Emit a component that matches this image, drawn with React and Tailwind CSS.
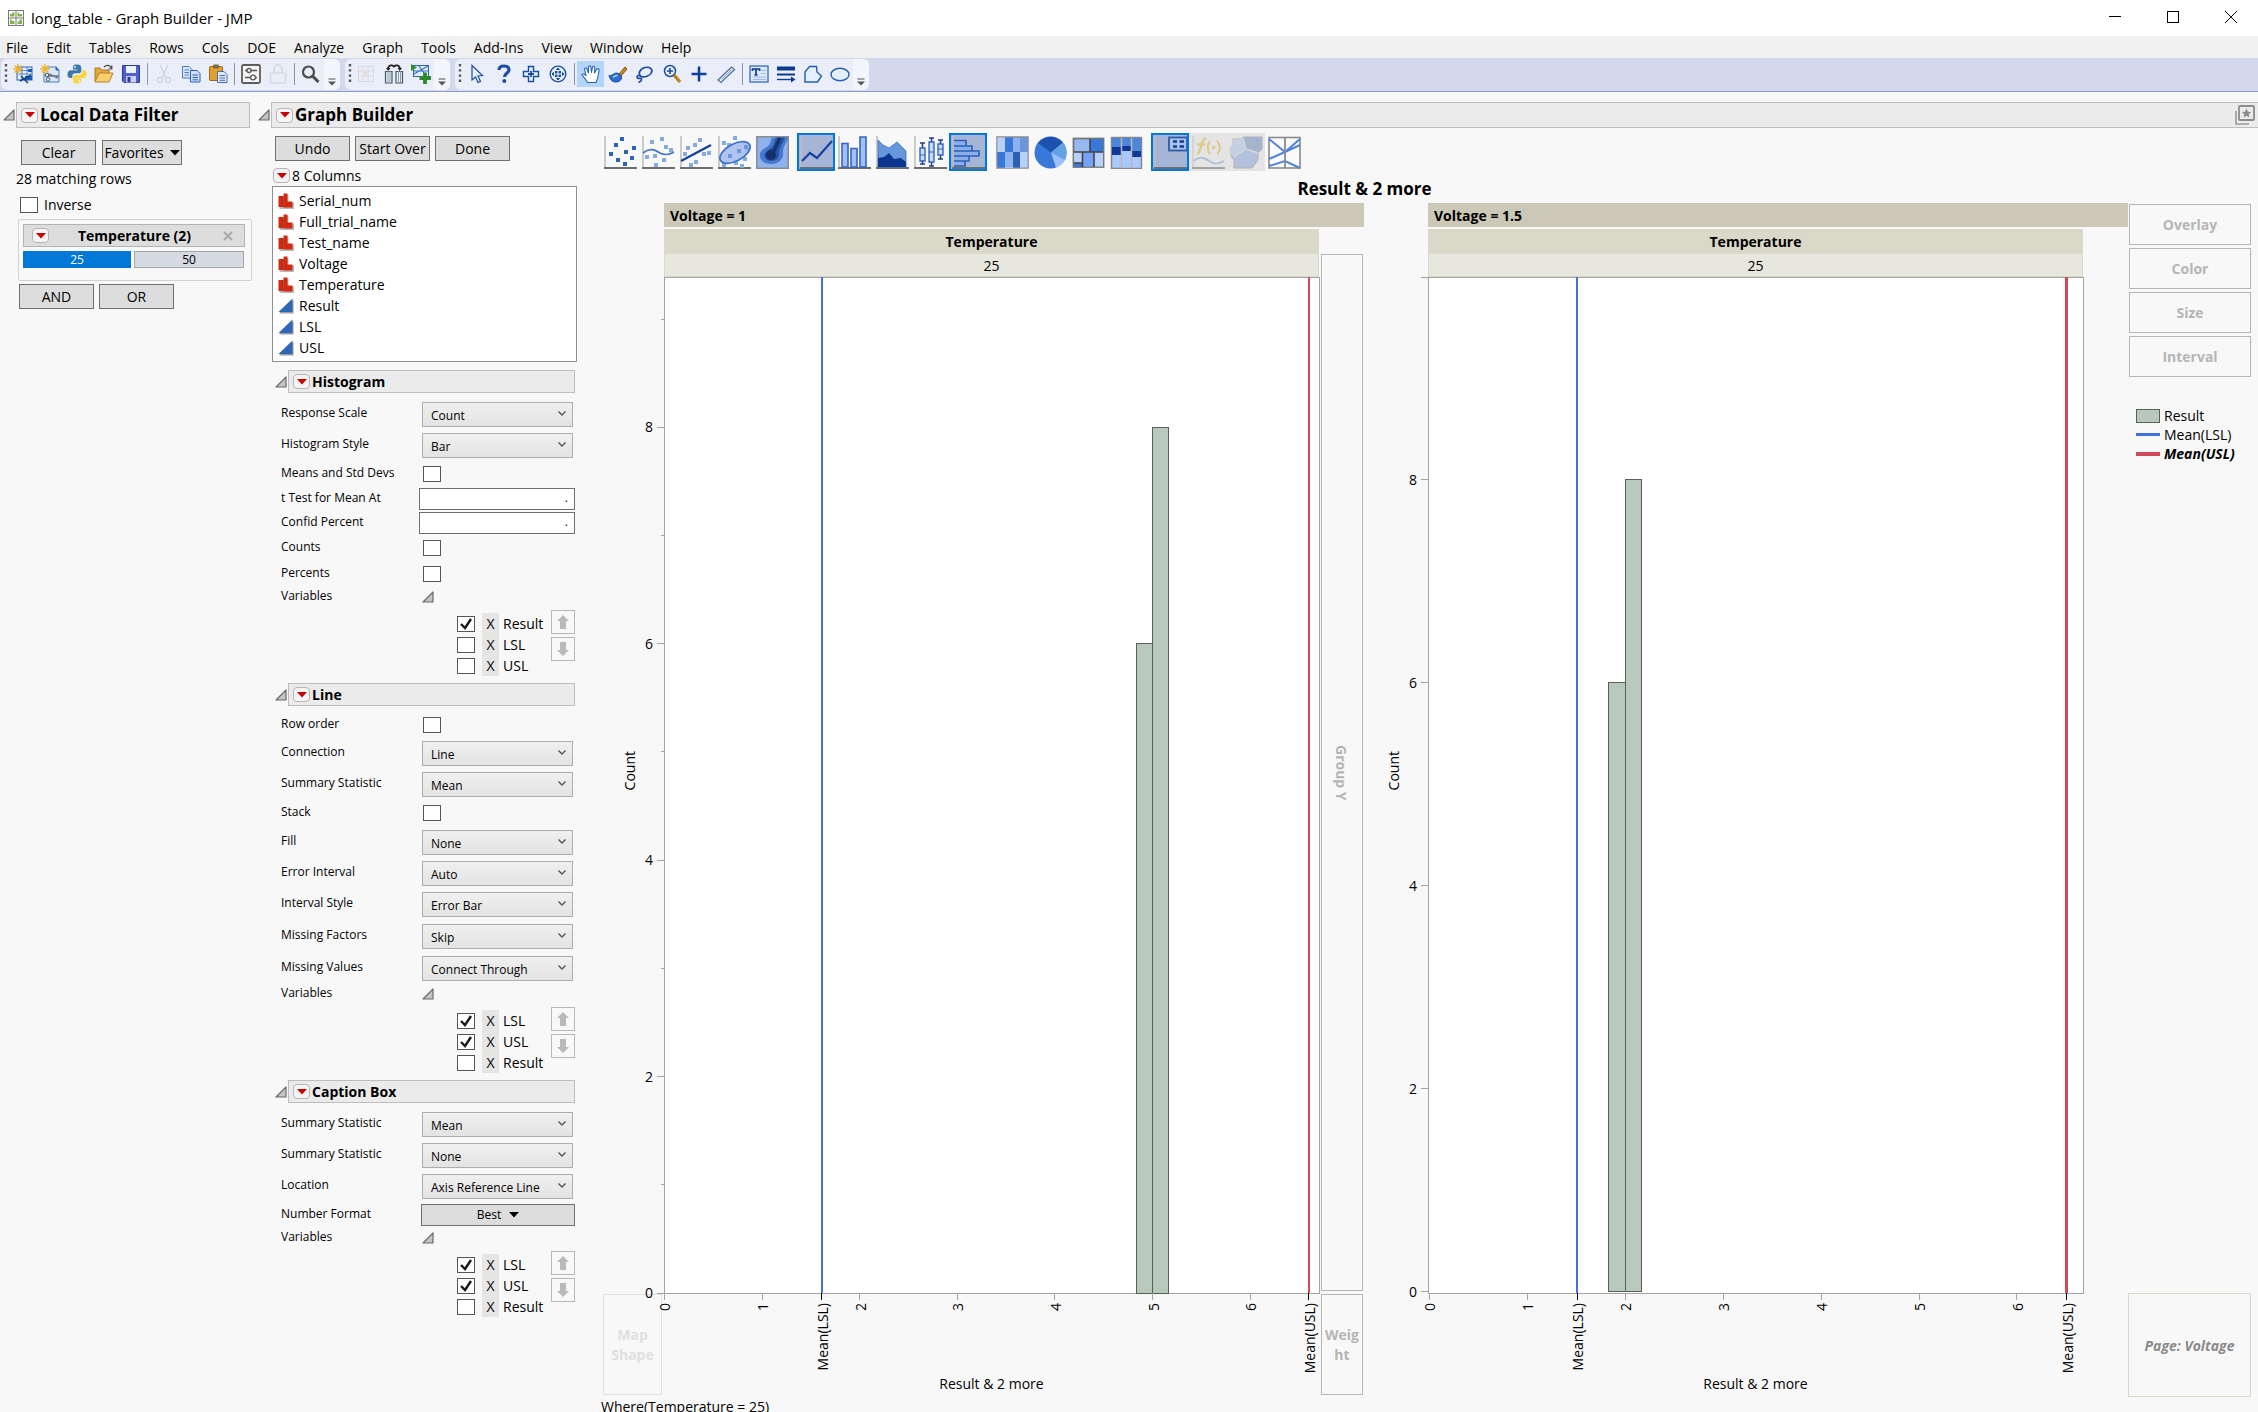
import React from "react";

/* ---------- small shared pieces ---------- */

function Ic({ children, size = "size-5", box = "0 0 20 20", dim = false }) {
  return (
    <svg viewBox={box} className={`${size} ${dim ? "opacity-25" : ""}`} fill="none" aria-hidden="true">
      {children}
    </svg>
  );
}

function Disclosure() {
  return (
    <button type="button" aria-label="Collapse" className="flex w-3 shrink-0 items-center justify-center">
      <svg viewBox="0 0 12 12" className="size-3" aria-hidden="true">
        <path d="M1 11 L11 1 V11 Z" fill="#c4c4c4" stroke="#6b6b6b" strokeWidth="1.2" strokeLinejoin="round" />
      </svg>
    </button>
  );
}

function RedMenu() {
  return (
    <button
      type="button"
      aria-label="Options"
      className="flex h-[15px] w-[17px] shrink-0 items-center justify-center rounded-sm border border-[#b5b5b5] bg-[#f4f4f4]"
    >
      <svg viewBox="0 0 10 6" className="h-1.5 w-2.5" aria-hidden="true">
        <path d="M0 0 H10 L5 5.6 Z" fill="#c80000" />
      </svg>
    </button>
  );
}

function GreyButton({ children, className = "w-[75px]" }) {
  return (
    <button type="button" className={`flex h-[25px] items-center justify-center border border-[#707070] bg-[#dddddd] text-[14px] whitespace-nowrap ${className}`}>
      {children}
    </button>
  );
}

function Check({ id, checked = false, label }) {
  return (
    <span className="relative flex h-4 w-[18px] shrink-0">
      <input
        id={id}
        type="checkbox"
        defaultChecked={checked}
        aria-label={label}
        className="peer m-0 h-4 w-[18px] appearance-none border border-[#555] bg-white"
      />
      <svg viewBox="0 0 18 16" className="pointer-events-none absolute inset-0 hidden h-4 w-[18px] peer-checked:block" aria-hidden="true">
        <path d="M4 8 L8 12 L14 3" fill="none" stroke="#1a1a1a" strokeWidth="2.4" />
      </svg>
    </span>
  );
}

/* ---------- title, menu, window toolbar ---------- */

function TitleBar() {
  return (
    <header className="flex h-9 shrink-0 items-center justify-between bg-white pl-2">
      <div className="flex items-center gap-[7px] text-[15px]">
        <svg viewBox="0 0 16 16" className="size-4" aria-hidden="true">
          <rect x="0.5" y="0.5" width="15" height="15" fill="#fff" stroke="#7a7a7a" />
          <path d="M8 0.5 V15.5 M0.5 8 H15.5" stroke="#7a7a7a" />
          <path d="M2 6.5 V4 H4 V2.5 H6.5 V6.5 Z M9.5 2.5 H11 V4 H14 V6.5 H9.5 Z M2 9.5 H4 V11 H6.5 V14 H2 Z M9.5 11.5 H11.5 V9.5 H14 V14 H9.5 Z" fill="#7db548" />
        </svg>
        <h1>long_table - Graph Builder - JMP</h1>
      </div>
      <div className="flex h-full gap-1 pb-0.5">
        <button type="button" aria-label="Minimize" className="flex w-[54px] items-center justify-center">
          <svg viewBox="0 0 12 12" className="size-3"><path d="M0 5.5 H12" stroke="#000" /></svg>
        </button>
        <button type="button" aria-label="Maximize" className="flex w-[54px] items-center justify-center">
          <svg viewBox="0 0 12 12" className="size-3"><rect x="0.5" y="0.5" width="11" height="11" fill="none" stroke="#000" /></svg>
        </button>
        <button type="button" aria-label="Close" className="flex w-[54px] items-center justify-center">
          <svg viewBox="0 0 12 12" className="size-3"><path d="M0 0 L12 12 M12 0 L0 12" stroke="#000" /></svg>
        </button>
      </div>
    </header>
  );
}

const MENUS = ["File", "Edit", "Tables", "Rows", "Cols", "DOE", "Analyze", "Graph", "Tools", "Add-Ins", "View", "Window", "Help"];

function MenuBar() {
  return (
    <nav className="flex h-[22px] shrink-0 items-center gap-[18px] bg-[#f0f0f0] pl-1.5 text-[14px]">
      {MENUS.map((m) => (
        <button type="button" key={m}>{m}</button>
      ))}
    </nav>
  );
}

function Tool({ label, active = false, children }) {
  return (
    <button type="button" aria-label={label} className={`flex h-[26px] w-[27px] items-center justify-center ${active ? "bg-[#b5d5f8]" : ""}`}>
      {children}
    </button>
  );
}

function Sep() {
  return <span className="flex h-[22px] w-1.5 justify-center"><span className="w-px bg-[#8d93a8]" /></span>;
}

function ToolGroup({ children }) {
  return (
    <div className="flex h-[31px] items-center rounded-md bg-[#eaeef9]">
      <svg viewBox="0 0 8 20" className="mb-1 h-5 w-2" aria-hidden="true">
        <path d="M5 1 V19" stroke="#555" strokeWidth="2.4" strokeDasharray="2.4 2.8" />
      </svg>
      <div className="flex items-center pb-0.5">{children}</div>
      <button type="button" aria-label="More tools" className="flex h-full w-4 items-end justify-center rounded-r-md bg-[#f2f5fc] pb-1">
        <svg viewBox="0 0 8 8" className="size-2"><path d="M0.5 1 H7.5" stroke="#555" /><path d="M0 3.5 H8 L4 7.5 Z" fill="#555" /></svg>
      </button>
    </div>
  );
}

function WindowToolbar() {
  const b = "#1d4ca0";
  return (
    <div className="flex h-[34px] shrink-0 items-start gap-[5px] border-b border-[#8e9cce] bg-[#d3d8ec] pt-px pl-px">
      <ToolGroup>
        <Tool label="New data table">
          <Ic>
            <rect x="4" y="3" width="15" height="13" fill="#e4eefb" stroke="#2c63b0" />
            <path d="M4 6.5 H19 M4 10 H19 M9 3 V16 M14 3 V16" stroke="#5b8bc9" />
            <path d="M12 12 H19 V16 H12 Z M15 5 h4 v3 h-4z" fill="#1d5fb4" />
            <path d="M7 17 L18 11 M8 12 L15 19" stroke="#123f86" strokeWidth="1.5" />
            <path d="M5 0 V10 M0 5 H10 M1.5 1.5 L8.5 8.5 M8.5 1.5 L1.5 8.5" stroke="#eeb22f" strokeWidth="1.4" />
          </Ic>
        </Tool>
        <Tool label="New script">
          <Ic>
            <path d="M7 3 H16 L19 6 V18 H4 V8" fill="#d9e7f8" stroke="#4d7fc0" />
            <path d="M16 2.5 V6 H19" fill="#3f7fcf" stroke="#2c63b0" />
            <path d="M8 12 H19 M9 10 L18 14" stroke="#6c7787" strokeWidth="1.5" />
            <circle cx="7" cy="11" r="1.8" stroke="#4b5563" /><circle cx="8" cy="15.5" r="1.8" stroke="#4b5563" />
            <path d="M5 0 V10 M0 5 H10 M1.5 1.5 L8.5 8.5 M8.5 1.5 L1.5 8.5" stroke="#eeb22f" strokeWidth="1.4" />
          </Ic>
        </Tool>
        <Tool label="Python">
          <Ic>
            <path d="M10 0.5 C6 0.5 6 2.2 6 4 V5.5 H10.5 V6.2 H4 C1.5 6.2 0.4 8 0.4 10.2 C0.4 12.5 1.5 14 3.5 14 H5.3 V12 C5.3 10.2 6.7 9.2 8.3 9.2 H12 C13.5 9.2 14.3 8 14.3 6.8 V4 C14.3 1.6 13 0.5 10 0.5 Z" fill="#3b78ab" />
            <circle cx="7.9" cy="2.9" r="0.9" fill="#fff" />
            <path d="M10.2 19.6 C14 19.6 14.3 17.9 14.3 16.2 V14.8 H9.7 V14 H16.2 C18.8 14 19.7 12.2 19.7 9.9 C19.7 7.6 18.6 6.2 16.7 6.2 H15.2 V8.2 C15.2 10 13.8 11 12.2 11 H8.3 C6.8 11 6 12.1 6 13.4 V16.2 C6 18.6 7.3 19.6 10.2 19.6 Z" fill="#fbd341" />
            <circle cx="12.4" cy="17.2" r="0.9" fill="#fff" />
          </Ic>
        </Tool>
        <Tool label="Open">
          <Ic>
            <path d="M1 17 V4 H6 L8 6 H15 V9" fill="#e3a93c" stroke="#a8792a" />
            <path d="M1 18 L5 9 H19 L15 18 Z" fill="#f7cf6d" stroke="#b5832c" />
            <path d="M10 3 C13 0.5 16 1 17 4 M17.8 1.5 V5 H14.5" stroke="#444" strokeWidth="1.2" />
          </Ic>
        </Tool>
        <Tool label="Save">
          <Ic>
            <path d="M1.5 1.5 H18.5 V18.5 H3 L1.5 17 Z" fill="#4f5fd0" stroke="#2c3a9e" />
            <rect x="5" y="2" width="10" height="7" fill="#eef2fb" /><rect x="5" y="12" width="10" height="6.5" fill="#c9d0ea" /><rect x="6.5" y="13" width="3" height="5" fill="#2c3a9e" />
          </Ic>
        </Tool>
        <Sep />
        <Tool label="Cut">
          <Ic dim>
            <path d="M6 1 L12 14 M14 1 L8 14" stroke="#7f93b5" strokeWidth="1.6" /><circle cx="6" cy="16" r="2.4" stroke="#7f93b5" strokeWidth="1.5" /><circle cx="14" cy="16" r="2.4" stroke="#7f93b5" strokeWidth="1.5" />
          </Ic>
        </Tool>
        <Tool label="Copy">
          <Ic>
            <path d="M1.5 2.5 H8 L11 5.5 V14 H1.5 Z" fill="#dbe8fb" stroke="#4a7ac2" /><path d="M3.5 6 H8 M3.5 8.5 H8 M3.5 11 H8" stroke="#4a7ac2" />
            <path d="M9.5 6.5 H16 L19 9.5 V18 H9.5 Z" fill="#cfe0fa" stroke="#2a5db5" /><path d="M11.5 11 H17 M11.5 13.5 H17 M11.5 15.8 H17" stroke="#2a5db5" />
          </Ic>
        </Tool>
        <Tool label="Paste">
          <Ic>
            <rect x="1.5" y="2.5" width="13" height="14" rx="1" fill="#e3a02f" stroke="#96661a" /><rect x="5" y="0.5" width="6" height="4" rx="1" fill="#7d6a45" />
            <path d="M9.5 7.5 H16 L19 10.5 V18.5 H9.5 Z" fill="#dbe8fb" stroke="#4a6fae" /><path d="M11.5 11.5 H17 M11.5 14 H17 M11.5 16.3 H17" stroke="#4a6fae" />
          </Ic>
        </Tool>
        <Sep />
        <Tool label="Preferences">
          <Ic>
            <rect x="1" y="1" width="18" height="18" rx="1.5" fill="#f5f5f5" stroke="#5c5c5c" strokeWidth="1.8" />
            <path d="M4 6.5 H16 M4 13.5 H16" stroke="#555" strokeWidth="1.4" /><circle cx="8" cy="6.5" r="2" fill="#fff" stroke="#555" strokeWidth="1.3" /><circle cx="12" cy="13.5" r="2.4" fill="#fff" stroke="#555" strokeWidth="1.3" />
          </Ic>
        </Tool>
        <Tool label="Lock">
          <Ic dim>
            <rect x="2.5" y="9" width="15" height="10" rx="1" stroke="#9aa0ad" strokeWidth="1.6" /><path d="M6 9 V5 a4 4 0 0 1 8 0 V9" stroke="#9aa0ad" strokeWidth="1.6" />
          </Ic>
        </Tool>
        <Sep />
        <Tool label="Search">
          <Ic><circle cx="7.5" cy="8" r="5.5" stroke="#4a4a4a" strokeWidth="2.2" /><path d="M11.5 12 L17.5 18" stroke="#4a4a4a" strokeWidth="3" /></Ic>
        </Tool>
      </ToolGroup>

      <ToolGroup>
        <Tool label="Data view">
          <Ic dim><rect x="1.5" y="2.5" width="15" height="15" stroke="#8fa4c4" /><path d="M1.5 7 H16.5 M1.5 12 H16.5 M6 2.5 V17.5 M11 2.5 V17.5" stroke="#c9a58f" /><rect x="6" y="7" width="6" height="6" fill="#dfae8e" /></Ic>
        </Tool>
        <Tool label="Compare columns">
          <Ic>
            <path d="M1.5 7.5 H8 V19 H1.5 Z M12 7.5 H18.5 V19 H12 Z" fill="#e6f0f7" stroke="#4b5563" strokeWidth="1.2" /><path d="M4 7 V19 M6 7 V19 M14.5 7 V19 M16.5 7 V19" stroke="#8aa0b3" />
            <path d="M4 4 C5 1 8 0.5 10 2.5 C12 0.5 15 1 16 4" stroke="#222" strokeWidth="1.8" /><path d="M2 4 H6.5 L4.2 7 Z M13.5 4 H18 L15.8 7 Z" fill="#222" />
          </Ic>
        </Tool>
        <Tool label="Add to table">
          <Ic>
            <rect x="2.5" y="1.5" width="15" height="11" fill="#e4eefb" stroke="#2c63b0" /><path d="M3 10 L17 2 M8 2 L15 12 M3 7 H17" stroke="#3a70bd" strokeWidth="1.2" />
            <path d="M0 0 L6 3.5 L0 7 Z" fill="#2f8f2f" /><path d="M14 8.5 V20 M8.5 14 H20" stroke="#2a8a2a" strokeWidth="3.8" />
          </Ic>
        </Tool>
      </ToolGroup>

      <ToolGroup>
        <Tool label="Arrow">
          <Ic><path d="M5 1.5 V16 L8.5 13 L11 18.5 L13.5 17.5 L11 12 L15.5 11.5 Z" fill="#e8f1ff" stroke={b} strokeWidth="1.2" /></Ic>
        </Tool>
        <Tool label="Help">
          <Ic>
            <path d="M5 6 C5 2.5 7.5 2 10 2 C13 2 15 3.5 15 6 C15 9 10.5 9 10.5 13" stroke={b} strokeWidth="3.2" /><circle cx="10.3" cy="17" r="2" fill={b} />
          </Ic>
        </Tool>
        <Tool label="Crosshair">
          <Ic><path d="M7.5 2.5 H12.5 V7.5 H17.5 V12.5 H12.5 V17.5 H7.5 V12.5 H2.5 V7.5 H7.5 Z" fill="#e4efff" stroke={b} strokeWidth="1.4" /><path d="M10 7 V13 M7 10 H13" stroke={b} strokeWidth="1.8" /></Ic>
        </Tool>
        <Tool label="Scroller">
          <Ic>
            <circle cx="10" cy="10" r="7.8" fill="#e4efff" stroke={b} strokeWidth="1.3" />
            <path d="M8.5 5.5 L10 4 L11.5 5.5 Z M8.5 14.5 L10 16 L11.5 14.5 Z M5.5 8.5 L4 10 L5.5 11.5 Z M14.5 8.5 L16 10 L14.5 11.5 Z" fill={b} stroke={b} /><rect x="7" y="7" width="6" height="6" fill={b} /><path d="M10 7 V13 M7 10 H13" stroke="#fff" />
          </Ic>
        </Tool>
        <Sep />
        <Tool label="Grabber" active>
          <Ic>
            <path d="M6.5 18.5 C4.5 15 2 12.5 1 10.5 C2 9.5 3.5 10 5 11.5 L3.5 5 C4 3.5 5.5 3.8 6 5 L7.5 9 L7.3 3 C7.8 1.5 9.5 1.5 9.8 3 L10.5 8.5 L11.5 3 C12.3 1.7 13.7 2.2 13.7 3.5 L13.5 9 L15.8 5 C17 4 18.3 5 18 6.3 C17.3 10.5 17.5 13 15 18.5 Z" fill="#fff" stroke="#2c63b0" strokeWidth="1.1" strokeLinejoin="round" />
          </Ic>
        </Tool>
        <Tool label="Brush">
          <Ic><path d="M11 10 L17 3 L19 5 L13 12 Z" fill="#c9892b" stroke="#7c4f10" /><path d="M1 11.5 C4 13 6 7.5 10.5 9.5 L13.5 12.5 C14.5 17 9 19 5 17.5 C3 16.5 1.5 14 1 11.5 Z" fill="#2e6ecf" stroke={b} /><path d="M5 13 C6.5 13 8 11 9.5 11.5" stroke="#bcd8ff" strokeWidth="1.5" /></Ic>
        </Tool>
        <Tool label="Lasso">
          <Ic><path d="M6 12.5 C2.5 10 4.5 5 10 3.5 C15 2.5 18 5 16.5 8.5 C15 12 9.5 13.5 6 12.5 C3.5 10.5 1 12 2.5 14 C4.5 15.5 8 12.5 6 17 L3.5 18.5" stroke={b} strokeWidth="1.7" /></Ic>
        </Tool>
        <Tool label="Magnifier">
          <Ic><circle cx="8" cy="7" r="5.5" fill="#e4efff" stroke={b} strokeWidth="1.5" /><path d="M8 4 V10 M5 7 H11" stroke={b} strokeWidth="1.6" /><path d="M12 11 L18 18" stroke="#b87f22" strokeWidth="3.2" /></Ic>
        </Tool>
        <Tool label="Plus">
          <Ic><path d="M10 2.5 V17.5 M2.5 10 H17.5" stroke="#11409a" strokeWidth="2.6" /></Ic>
        </Tool>
        <Tool label="Ruler">
          <Ic><path d="M2 16 L15.5 3 L18.500 5.500 L5 18.500 Z" fill="#eef4ff" stroke="#50709f" strokeWidth="1.3" /><path d="M5.5 15.5 L15.500 5.500" stroke="#7f9ac4" /></Ic>
        </Tool>
        <Sep />
        <Tool label="Text box">
          <Ic><rect x="1" y="2" width="18" height="16" fill="#dce9fb" stroke="#3a68b3" strokeWidth="1.3" /><path d="M12 6.5 H17 M12 9.5 H17 M4 13 H17 M4 15.5 H17" stroke="#9db9e3" /><path d="M3.5 7 V5 H10.5 V7 M7 5 V11 M5.5 11 H8.5" stroke="#0d3a8f" strokeWidth="1.7" /></Ic>
        </Tool>
        <Tool label="Line">
          <Ic><path d="M1 4.5 H19" stroke="#0d3a8f" strokeWidth="4" /><path d="M1 10.5 H19" stroke="#0d3a8f" strokeWidth="2" /><path d="M1 15.5 H16" stroke="#0d3a8f" strokeWidth="1.4" /><path d="M15 12.5 L19.5 15.5 L15 18.5 Z" fill="#0d3a8f" /></Ic>
        </Tool>
        <Tool label="Polygon">
          <Ic><path d="M2 18 V8 L6.5 2.5 H13.5 L14 8 L18.5 12 L14.5 18 Z" fill="#e4efff" stroke="#2c5cab" strokeWidth="1.4" /></Ic>
        </Tool>
        <Tool label="Oval">
          <Ic><ellipse cx="10" cy="10.5" rx="9" ry="6.2" fill="#e4efff" stroke="#2c5cab" strokeWidth="1.4" /></Ic>
        </Tool>
      </ToolGroup>
    </div>
  );
}

/* ---------- local data filter ---------- */

function DataFilter() {
  return (
    <aside className="w-[258px] shrink-0 pt-2.5 pl-[3px]">
      <div className="mr-2 flex items-center gap-px">
        <Disclosure />
        <div className="flex h-[26px] flex-1 items-center gap-0.5 border border-[#bdbdbd] bg-[#ebebeb] pl-1">
          <RedMenu />
          <h2 className="text-[17px] font-bold">Local Data Filter</h2>
        </div>
      </div>
      <div className="mt-3 ml-[18px] flex gap-1.5">
        <GreyButton>Clear</GreyButton>
        <GreyButton className="w-20">
          <span className="flex items-center gap-1.5">Favorites
            <svg viewBox="0 0 10 6" className="h-1.5 w-2.5" aria-hidden="true"><path d="M0 0 H10 L5 5.5 Z" fill="#000" /></svg>
          </span>
        </GreyButton>
      </div>
      <p className="mt-[3px] ml-[13px] text-[14px] leading-[22px]">28 matching rows</p>
      <div className="mt-1 ml-[17px] flex h-[22px] items-center gap-1.5">
        <Check id="inverse" />
        <label htmlFor="inverse" className="text-[14px] leading-5">Inverse</label>
      </div>
      <section className="mt-[3px] mr-1.5 ml-[15px] h-[62px] rounded-xs border border-[#d2d2d2] p-1">
        <div className="mr-0.5 flex h-[23px] items-center border border-[#b3b3b3] bg-[#dddddd] px-2">
          <RedMenu />
          <h3 className="flex-1 text-center text-[14px] font-bold">Temperature (2)</h3>
          <button type="button" aria-label="Remove filter" className="flex w-4 justify-center">
            <svg viewBox="0 0 10 10" className="size-2.5"><path d="M1 1 L9 9 M9 1 L1 9" stroke="#a9a9a9" strokeWidth="2" /></svg>
          </button>
        </div>
        <div className="mt-1 mr-[3px] flex gap-[3px] text-[12px] leading-none">
          <button type="button" className="h-[17px] flex-1 bg-[#0078d7] text-white">25</button>
          <button type="button" className="h-[17px] flex-1 border border-[#a4a4a4] bg-[#d6dae2]">50</button>
        </div>
      </section>
      <div className="mt-[3px] ml-4 flex gap-[5px]">
        <GreyButton>AND</GreyButton>
        <GreyButton>OR</GreyButton>
      </div>
    </aside>
  );
}

/* ---------- graph builder controls ---------- */

const COLUMNS = [
  ["Serial_num", "nominal"],
  ["Full_trial_name", "nominal"],
  ["Test_name", "nominal"],
  ["Voltage", "nominal"],
  ["Temperature", "nominal"],
  ["Result", "continuous"],
  ["LSL", "continuous"],
  ["USL", "continuous"],
];

function ColumnIcon({ kind }) {
  return (
    <svg viewBox="0 0 16 16" className="size-4" aria-hidden="true">
      {kind === "nominal" ? (
        <>
          <path d="M1.5 4 H6 V2 H10.5 V9.5 H16 V16 H1.5 Z" fill="#b9b9b9" />
          <path d="M0.5 3 H5 V14 H0.5 Z M5.5 0.5 H9.5 V14.5 H5.5 Z M9.5 8.5 H14.5 V14.5 H9.500 Z" fill="#d22a10" />
          <path d="M5.200 3 V14" stroke="#a01c08" strokeWidth="0.7" />
        </>
      ) : (
        <>
          <path d="M1 15.5 L15.5 2 V15.5 Z" fill="#9b9b9b" />
          <path d="M0.5 14 L14.5 0.5 V14 Z" fill="#2f66b5" />
        </>
      )}
    </svg>
  );
}

function Section({ title, children }) {
  return (
    <section>
      <div className="mr-0.5 ml-[3px] flex items-center">
        <Disclosure />
        <div className="ml-px flex h-[23px] flex-1 items-center gap-0.5 border border-[#bdbdbd] bg-[#ebebeb] pl-1">
          <RedMenu />
          <h3 className="text-[14px] font-bold">{title}</h3>
        </div>
      </div>
      <div className="mt-1.5">{children}</div>
    </section>
  );
}

function Row({ label, id, h, children }) {
  return (
    <div className={`flex items-center pl-[9px] ${h}`}>
      <label htmlFor={id} className="w-[138px] shrink-0 pb-[3px] text-[12px] leading-4">{label}</label>
      {children}
    </div>
  );
}

function SelectRow({ label, id, value, tall = false }) {
  return (
    <Row label={label} id={id} h={tall ? "h-8" : "h-[31px]"}>
      <div className="relative ml-[3px] w-[151px]">
        <select id={id} defaultValue={value} className="h-[25px] w-full appearance-none border border-[#adadad] bg-linear-to-b from-[#f0f0f0] to-[#e3e3e3] pt-[3px] pl-2 text-[12px] leading-4">
          <option>{value}</option>
        </select>
        <svg viewBox="0 0 8 5" className="pointer-events-none absolute top-[9px] right-[7px] h-[5px] w-2" aria-hidden="true"><path d="M0.5 0.5 L4 4 L7.5 0.5" fill="none" stroke="#555" strokeWidth="1.4" /></svg>
      </div>
    </Row>
  );
}

function CheckRow({ label, id }) {
  return (
    <Row label={label} id={id} h="h-[26px]">
      <div className="ml-1"><Check id={id} /></div>
    </Row>
  );
}

function InputRow({ label, id }) {
  return (
    <Row label={label} id={id} h="h-6">
      <input id={id} defaultValue="." className="h-[22px] w-[156px] border border-[#6f6f6f] bg-white pr-1.5 pb-1 text-right text-[12px]" />
    </Row>
  );
}

function Arrow({ down = false }) {
  return (
    <button type="button" aria-label={down ? "Move down" : "Move up"} className="flex size-6 items-center justify-center border border-[#b5b8bc]">
      <svg viewBox="0 0 12 14" className={`h-3.5 w-3 ${down ? "rotate-180" : ""}`}><path d="M6 0 L12 6 H9 V14 H3 V6 H0 Z" fill="#b9b9b9" /></svg>
    </button>
  );
}

function Variables({ group, items }) {
  return (
    <>
      <div className="flex h-5 items-center pl-[9px]">
        <span className="w-[141px] pb-[3px] text-[12px] leading-4">Variables</span>
        <Disclosure />
      </div>
      <div className="mt-[3px] mr-0.5 mb-[7px] flex justify-end">
        <ul className="mt-[3px] w-[94px]">
          {items.map(([name, on]) => (
            <li key={name} className="flex h-[21px] items-center">
              <Check id={`${group}-${name}`} checked={on} />
              <span className="ml-[7px] flex h-full w-[17px] items-center justify-center bg-[#e5e5e3] text-[14px]">X</span>
              <label htmlFor={`${group}-${name}`} className="ml-1 text-[14px]">{name}</label>
            </li>
          ))}
        </ul>
        <div className="flex flex-col gap-[3px]">
          <Arrow />
          <Arrow down />
        </div>
      </div>
    </>
  );
}

function Controls() {
  return (
    <div className="w-[305px] shrink-0 pt-2">
      <div className="ml-[3px] flex gap-[5px]">
        <GreyButton>Undo</GreyButton>
        <GreyButton>Start Over</GreyButton>
        <GreyButton>Done</GreyButton>
      </div>
      <div className="mt-1 ml-px flex h-[21px] items-center gap-0.5">
        <RedMenu />
        <span className="text-[14px]">8 Columns</span>
      </div>
      <ul className="mb-2 border border-[#8f8f8f] bg-white py-[3px] pl-[5px]">
        {COLUMNS.map(([name, kind]) => (
          <li key={name} className="flex h-[21px] items-center gap-[5px] text-[14px]">
            <ColumnIcon kind={kind} />
            {name}
          </li>
        ))}
      </ul>
      <Section title="Histogram">
        <SelectRow label="Response Scale" id="resp" value="Count" />
        <SelectRow label="Histogram Style" id="hstyle" value="Bar" />
        <CheckRow label="Means and Std Devs" id="means" />
        <InputRow label="t Test for Mean At" id="ttest" />
        <InputRow label="Confid Percent" id="confid" />
        <CheckRow label="Counts" id="counts" />
        <CheckRow label="Percents" id="percents" />
        <Variables group="hist" items={[["Result", true], ["LSL", false], ["USL", false]]} />
      </Section>
      <Section title="Line">
        <CheckRow label="Row order" id="roworder" />
        <SelectRow label="Connection" id="conn" value="Line" />
        <SelectRow label="Summary Statistic" id="lstat" value="Mean" />
        <CheckRow label="Stack" id="stack" />
        <SelectRow label="Fill" id="fill" value="None" tall />
        <SelectRow label="Error Interval" id="errint" value="Auto" />
        <SelectRow label="Interval Style" id="intstyle" value="Error Bar" />
        <SelectRow label="Missing Factors" id="missf" value="Skip" tall />
        <SelectRow label="Missing Values" id="missv" value="Connect Through" tall />
        <Variables group="line" items={[["LSL", true], ["USL", true], ["Result", false]]} />
      </Section>
      <Section title="Caption Box">
        <SelectRow label="Summary Statistic" id="cstat1" value="Mean" />
        <SelectRow label="Summary Statistic" id="cstat2" value="None" />
        <SelectRow label="Location" id="loc" value="Axis Reference Line" />
        <Row label="Number Format" id="numfmt" h="h-[26px]">
          <button id="numfmt" type="button" className="ml-0.5 flex h-[22px] w-[154px] items-center justify-center gap-2 border border-[#707070] bg-[#dddddd] text-[12px]">
            Best
            <svg viewBox="0 0 10 6" className="h-1.5 w-2.5" aria-hidden="true"><path d="M0 0 H10 L5 5.5 Z" fill="#000" /></svg>
          </button>
        </Row>
        <Variables group="cap" items={[["LSL", true], ["USL", true], ["Result", false]]} />
      </Section>
    </div>
  );
}

/* ---------- element palette ---------- */

function Dots({ points, fill = "#2f63b8" }) {
  return points.map(([x, y]) => <rect key={`${x}-${y}`} x={x} y={y} width="4" height="4" fill={fill} />);
}

const AXES = <><path d="M1 0 V32" stroke="#bdbdbd" strokeWidth="1.5" /><path d="M0 32 H33" stroke="#6e6e6e" strokeWidth="1.8" /></>;

const ELEMENTS = [
  [
    ["Points", <>{AXES}<Dots points={[[16, 1], [10, 7], [28, 10], [20, 14], [5, 16], [26, 20], [12, 22], [19, 26]]} /></>],
    ["Smoother", <>{AXES}<Dots fill="#86abe2" points={[[8, 4], [18, 1], [22, 9], [27, 12], [3, 19], [11, 18], [20, 22], [12, 27]]} /><path d="M1 17 C8 11 13 14 18 17 C23 19.5 28 18.5 32 16" stroke="#4a78c4" strokeWidth="1.7" /></>],
    ["Line of fit", <>{AXES}<Dots fill="#86abe2" points={[[18, 2], [13, 7], [6, 10], [27, 15], [3, 16], [22, 16], [14, 24], [9, 27]]} /><path d="M1 25 L31 9" stroke="#16429d" strokeWidth="2.4" /></>],
    ["Ellipse", <>{AXES}<Dots fill="#86abe2" points={[[15, 0], [4, 5], [9, 7], [27, 11], [25, 21], [16, 25], [4, 27], [22, 28]]} /><ellipse cx="17" cy="16.5" rx="16.5" ry="8.5" transform="rotate(-28 17 16.5)" fill="#9db6ec" fillOpacity="0.8" stroke="#3f72cc" strokeWidth="1.8" /><Dots fill="#6d95dc" points={[[19, 13], [10, 18], [26, 9]]} /></>],
    ["Contour", <><rect x="0.8" y="0.8" width="31.5" height="31.5" fill="#8fb2ee" stroke="#8a8a8a" strokeWidth="1.5" /><path d="M16 1.5 H32 C31 7 27 10 27 16 C28 24 22 28 15 28 C8 28 3 24 4 18 C5 12 13 12 14 7 Z" fill="#4779ce" /><path d="M20 1.5 H29 C27 7 23 11 23 18 C23 23 19 25 15 25 C11 25 8 22 8.5 18.5 C10 14 17 12 18 7 Z" fill="#2452a4" /><circle cx="15" cy="19" r="5" fill="#14306c" /><path d="M17 17 L24 2" stroke="#14306c" strokeWidth="3" /></>],
  ],
  [
    ["Line", <>{AXES}<path d="M2 25 L10 17 L17 22 L32 5" stroke="#16429d" strokeWidth="2.2" /></>, true],
    ["Bar", <>{AXES}<path d="M4 7.5 H10 V31 H4 Z M13 12.5 H19 V31 H13 Z M22 1 H28 V31 H22 Z" fill="#9fc0f8" stroke="#3565bd" strokeWidth="1.6" /></>],
    ["Area", <>{AXES}<path d="M2 4 L7 9 L13 12 L21 6 L30 15 V31 H2 Z" fill="#6597dd" stroke="#3e6db8" strokeWidth="0.8" /><path d="M2 22 L8 21 L13 17 L18 23 L25 22 L30 26 V31 H2 Z" fill="#0c3590" /></>],
    ["Box plot", <>{AXES}<path d="M8.5 7 V28 M6 7 H11 M6 28 H11 M17.5 2 V30 M15 2 H20 M15 30 H20 M26.5 4 V23 M24 4 H29 M24 23 H29" stroke="#26427e" strokeWidth="1.6" /><path d="M6 12 H11 V25 H6 Z M15 6 H20 V26 H15 Z M24 8 H29 V19 H24 Z" fill="#c7dbfb" stroke="#3565bd" strokeWidth="1.4" /><path d="M6 19 H11 M15 16 H20 M24 13 H29" stroke="#3565bd" /></>],
    ["Histogram", <>{AXES}<path d="M2 4.5 H14 V10 H20 V15 H27 V20 H17 V25 H13 V30 H2 M2 10 H14 M2 15 H20 M2 20 H17 M2 25 H13" stroke="#2e5fb8" strokeWidth="1.6" fill="#8aaeea" /></>, true],
  ],
  [
    ["Heatmap", <><rect x="1" y="1" width="31" height="31" fill="#8fb2ee" stroke="#8a8a8a" strokeWidth="1.5" /><path d="M1.5 1.5 H9 V16 H1.5 Z M17 16 H9 V32 H17 Z" fill="#b7d1fc" /><path d="M9 1.5 H17 V16 H9 Z M1.5 16 H9 V31.5 H1.5 Z" fill="#3878d8" /><path d="M9 16 H17 V31.5 H9 Z" fill="#8fb2ee" /><path d="M24 1.5 H31.5 V16 H24 Z" fill="#6995df" /><path d="M17 16 H24 V31.5 H17 Z" fill="#2c5fb8" /><path d="M24 16 H31.5 V31.5 H24 Z" fill="#b7d1fc" /></>],
    ["Pie", <><circle cx="16.5" cy="16.5" r="16" fill="#3878d8" /><path d="M17 16.5 L4 7 A16 16 0 0 1 29 6.5 Z" fill="#1e52b0" /><path d="M17 16.5 L29 6.5 A16 16 0 0 1 31 24 Z" fill="#64a2e6" /><path d="M17 16.5 L31 24 A16 16 0 0 1 22 31.5 Z" fill="#9cc0fb" /></>],
    ["Treemap", <><rect x="1.5" y="2.5" width="30" height="28.5" fill="#97b9f2" stroke="#777" strokeWidth="1.8" /><path d="M18 3 H31 V16 H18 Z M2 27 H10 V31 H2 Z" fill="#3878d8" /><path d="M2 16 H10 V27 H2 Z M22 16 H31 V30.5 H22 Z" fill="#b7d1fc" /><path d="M11 16 H22 V30.5 H11 Z" fill="#74a3fc" /><path d="M18 3 V16 M2 16 H31 M10.5 16 V31 M22 16 V31 M2 27 H10" stroke="#444" strokeWidth="1.6" /></>],
    ["Mosaic", <><rect x="1.5" y="1.5" width="30" height="31" fill="#a9c8fb" stroke="#888" strokeWidth="1.5" /><path d="M2 2 H31 V16 H22 V11 H11 V12 H2 Z" fill="#4c85da" /><path d="M2 11 H11 V19 H2 Z M12 10 H21 V15 H12 Z M22 15 H31 V21 H22 Z" fill="#0f3796" /><path d="M11.5 2 V32 M21.5 2 V32" stroke="#b8b8b8" strokeWidth="1.5" /></>],
  ],
  [
    ["Caption box", <>{AXES}<rect x="15" y="1.5" width="18" height="13" fill="#a9c2ef" stroke="#2f5aa8" strokeWidth="1.8" /><path d="M19 5.5 H23 M25.5 5.5 H30 M19 10.5 H23 M25.5 10.5 H30" stroke="#123f8e" strokeWidth="2.4" /></>, true],
    ["Formula", <g opacity="0.55">{AXES}<path d="M5 18 C9 18 8.5 3 14 2 M5 8.5 H13" stroke="#d9b640" strokeWidth="2.4" /><path d="M18 5 C15 8 15 15 18 18 M25 5 C28.5 8 28.5 15 25 18" stroke="#d9b640" strokeWidth="2" /><circle cx="21.5" cy="11.5" r="1.8" fill="#d9b640" /><path d="M2 25 C9 18 15 24 21 27 C26 28.5 29 27 32 25" stroke="#7a9acb" strokeWidth="1.7" /></g>, false, true],
    ["Map shapes", <><path d="M3 3 H13 V1 H32 V13 L28 17 V24 L22 32 H4 V24 L1 20 V11 L3 9 Z" fill="#b2c1dc" stroke="#b3b3b3" /><path d="M3 3 H13 L16 13 L4 21 L1 18 V11 L3 9 Z" fill="#c4d0e4" /><path d="M13 1 H32 V13 L28 17 L16 13 Z" fill="#a5b4cc" /><path d="M16 13 L4 21 M16 13 L28 17 M13 2 L16 13" stroke="#d6d6d6" strokeWidth="1.4" /></>, false, true],
    ["Parallel", <><rect x="1" y="1.5" width="31" height="30.5" fill="#fafafa" stroke="#8a8a8a" strokeWidth="1.6" /><path d="M1 3 L17 16 L32 3 M1 23 L17 16 L32 9 M1 30 L17 25 L32 32" stroke="#5284dc" strokeWidth="2" /><path d="M17 1 V32" stroke="#8a8a8a" strokeWidth="1.8" /></>],
  ],
];

function Palette() {
  return (
    <div className="flex h-[38px] shrink-0 gap-1.5">
      {ELEMENTS.map((group, i) => (
        <div key={i} className="flex">
          {group.map(([name, art, on, off]) => (
            <button
              type="button"
              key={name}
              aria-label={name}
              aria-pressed={!!on}
              disabled={!!off}
              className={`flex size-[38px] items-center justify-center ${on ? "border-2 border-[#0078d7] bg-[#a6b4d6]" : off ? "bg-[#e4e4e4]" : ""}`}
            >
              <svg viewBox="0 0 33 33" className="size-[33px] shrink-0" fill="none" aria-hidden="true">{art}</svg>
            </button>
          ))}
        </div>
      ))}
    </div>
  );
}

/* ---------- charts ---------- */

const pct = (v) => `${v}%`;

function Chart({ yMin, yMax, xMin, xMax, minor, topTick, bars, lsl, usl, uslWidth }) {
  const xSpan = xMax - xMin;
  const ySpan = yMax - yMin;
  const X = (v) => pct(((v - xMin) / xSpan) * 100);
  const Y = (v) => pct(100 - ((v - yMin) / ySpan) * 100);
  return (
    <svg className="absolute inset-0 size-full overflow-visible text-[14px]" aria-label="Histogram of Result">
      <rect width="100%" height="100%" fill="#fff" stroke="#a3a3a3" shapeRendering="crispEdges" />
      {bars.map(([from, to, n]) => (
        <rect key={from} x={X(from)} y={Y(n)} width={pct(((to - from) / xSpan) * 100)} height={pct((n / ySpan) * 100)} fill="#b8c8bb" stroke="#566257" shapeRendering="crispEdges" />
      ))}
      <line x1={X(lsl)} x2={X(lsl)} y1="0" y2="100%" stroke="#4470de" strokeWidth="2" shapeRendering="crispEdges" />
      <line x1={X(usl)} x2={X(usl)} y1="0" y2="100%" stroke="#d14a59" strokeWidth={uslWidth} shapeRendering="crispEdges" />
      {[0, 2, 4, 6, 8].map((v) => (
        <g key={v}>
          <line x1="-7" x2="0" y1={Y(v)} y2={Y(v)} stroke="#a3a3a3" shapeRendering="crispEdges" />
          <text x="-11" y={Y(v)} dy="5" textAnchor="end">{v}</text>
        </g>
      ))}
      {minor.map((v) => (
        <line key={v} x1="-3" x2="0" y1={Y(v)} y2={Y(v)} stroke="#a3a3a3" shapeRendering="crispEdges" />
      ))}
      {topTick && <line x1="-7" x2="0" y1="0" y2="0" stroke="#a3a3a3" shapeRendering="crispEdges" />}
      {[0, 1, 2, 3, 4, 5, 6].map((v) => (
        <svg key={v} x={X(v)} y="100%" overflow="visible">
          <line y1="0" y2="7" stroke="#a3a3a3" shapeRendering="crispEdges" />
          <text transform="rotate(-90)" x="-10" y="6" textAnchor="end">{v}</text>
        </svg>
      ))}
      {[[lsl, "Mean(LSL)"], [usl, "Mean(USL)"]].map(([v, name]) => (
        <svg key={name} x={X(v)} y="100%" overflow="visible">
          <line y1="0" y2="7" stroke="#000" shapeRendering="crispEdges" />
          <text transform="rotate(-90)" x="-10" y="6" textAnchor="end">{name}</text>
        </svg>
      ))}
    </svg>
  );
}

function Panel({ title, chart, extras }) {
  return (
    <section className="grid grid-cols-[63px_minmax(0,1fr)_45px] grid-rows-[24px_2px_25px_23px_minmax(0,1fr)_104px]">
      <h3 className="col-span-2 col-start-2 flex items-center bg-[#cbc8b8] pl-1.5 text-[14px] font-bold">{title}</h3>
      <div className="col-start-2 row-start-3 flex items-center justify-center bg-[#dad8c8] text-[14px] font-bold">Temperature</div>
      <div className="col-start-2 row-start-4 flex items-center justify-center border border-t-0 border-[#dad8c8] bg-[#e7e7dd] text-[14px]">25</div>
      <div className="col-start-1 row-start-5 flex items-center justify-center pr-1.5 pb-7 text-[14px]">
        <span className="rotate-180 [writing-mode:vertical-rl]">Count</span>
      </div>
      <div className="relative col-start-2 row-start-5">
        <Chart {...chart} />
      </div>
      <div className="col-start-2 row-start-6 flex items-end justify-center pb-[3px] text-[14px] leading-5">Result &amp; 2 more</div>
      {extras && (
        <>
          <div className="col-start-3 row-span-2 row-start-4 mr-px mb-0.5 ml-0.5 flex items-center justify-center border border-[#b5b5b5] pr-0.5 text-[14px] font-bold text-[#b5b5b5]">
            <span className="[writing-mode:vertical-rl]">Group Y</span>
          </div>
          <div className="col-start-1 row-start-6 mt-px mr-0.5 mb-0.5 ml-0.5 flex items-center justify-center border border-[#e2e2e2] text-center text-[14px] leading-5 font-bold text-[#e0e0e0]">
            Map<br />Shape
          </div>
          <div className="col-start-3 row-start-6 mt-px mr-px mb-0.5 ml-0.5 flex items-center justify-center border border-[#b5b5b5] text-center text-[14px] leading-5 font-bold text-[#b5b5b5]">
            Weig<br />ht
          </div>
        </>
      )}
    </section>
  );
}

const CHART_1 = { yMin: 0, yMax: 9.39, xMin: -0.005, xMax: 6.705, minor: [1, 3, 5, 7, 9], bars: [[4.833, 5, 6], [5, 5.167, 8]], lsl: 1.61, usl: 6.6, uslWidth: 2 };
const CHART_2 = { yMin: -0.01, yMax: 10, xMin: -0.015, xMax: 6.675, minor: [], topTick: true, bars: [[1.833, 2, 6], [2, 2.167, 8]], lsl: 1.51, usl: 6.51, uslWidth: 3 };

function RightRail() {
  return (
    <aside className="flex w-[123px] shrink-0 flex-col pt-[33px]">
      <div className="ml-px flex flex-col gap-[3px]">
        {["Overlay", "Color", "Size", "Interval"].map((z) => (
          <button type="button" key={z} className="h-[41px] border border-[#b5b5b5] text-[14px] font-bold text-[#b5b5b5]">{z}</button>
        ))}
      </div>
      <ul className="mt-[29px] ml-2 text-[14px] leading-[19px]">
        <li className="flex items-center gap-1"><span className="h-3.5 w-6 border border-[#566257] bg-[#b8c8bb]" />Result</li>
        <li className="flex items-center gap-1"><span className="h-[3px] w-6 bg-[#4470de]" />Mean(LSL)</li>
        <li className="flex items-center gap-1 font-bold italic"><span className="h-1 w-6 bg-[#d14a59]" />Mean(USL)</li>
      </ul>
      <div className="mt-auto mb-[15px] flex h-[104px] items-center justify-center border border-[#dad8c8] text-[14px] font-bold text-[#8a8a8a] italic">Page: Voltage</div>
    </aside>
  );
}

function GraphBuilder() {
  return (
    <main className="flex min-w-0 flex-1 flex-col pt-2.5">
      <div className="flex shrink-0 items-center gap-px">
        <Disclosure />
        <div className="flex h-[26px] flex-1 items-center gap-0.5 border border-r-0 border-[#bdbdbd] bg-[#ebebeb] pr-[3px] pl-1">
          <RedMenu />
          <h2 className="flex-1 text-[17px] font-bold">Graph Builder</h2>
          <button type="button" aria-label="Bookmark">
            <svg viewBox="0 0 20 20" className="size-5" fill="none">
              <path d="M1 6 V19 H14" stroke="#9a9a9a" strokeWidth="1.6" /><rect x="4" y="1" width="15" height="14" rx="1" stroke="#8c8c8c" strokeWidth="1.8" />
              <path d="M11.5 3.5 L12.9 6.7 L16.2 7 L13.7 9.2 L14.5 12.5 L11.5 10.8 L8.5 12.5 L9.3 9.2 L6.8 7 L10.1 6.7 Z" fill="#8c8c8c" />
            </svg>
          </button>
        </div>
      </div>
      <div className="flex min-h-0 flex-1 pr-[7px] pl-3.5">
        <Controls />
        <div className="ml-6 flex min-w-0 flex-1 flex-col pt-[5px]">
          <Palette />
          <div className="flex min-h-0 flex-1">
            <div className="flex min-w-0 flex-1 flex-col">
              <h2 className="flex h-8 shrink-0 items-center justify-center pt-1 text-[17px] font-bold">Result &amp; 2 more</h2>
              <div className="grid min-h-0 flex-1 grid-cols-2 gap-px">
                <Panel title="Voltage = 1" chart={CHART_1} extras />
                <Panel title="Voltage = 1.5" chart={CHART_2} />
              </div>
              <p className="h-[15px] shrink-0 text-[14px] leading-5">Where(Temperature = 25)</p>
            </div>
            <RightRail />
          </div>
        </div>
      </div>
    </main>
  );
}

export default function App() {
  return (
    <div className="flex h-screen flex-col overflow-hidden bg-[#f8f8f8] font-['Open_Sans','Noto_Sans',sans-serif] text-black">
      <TitleBar />
      <MenuBar />
      <WindowToolbar />
      <div className="flex min-h-0 flex-1 overflow-hidden">
        <DataFilter />
        <GraphBuilder />
      </div>
    </div>
  );
}
